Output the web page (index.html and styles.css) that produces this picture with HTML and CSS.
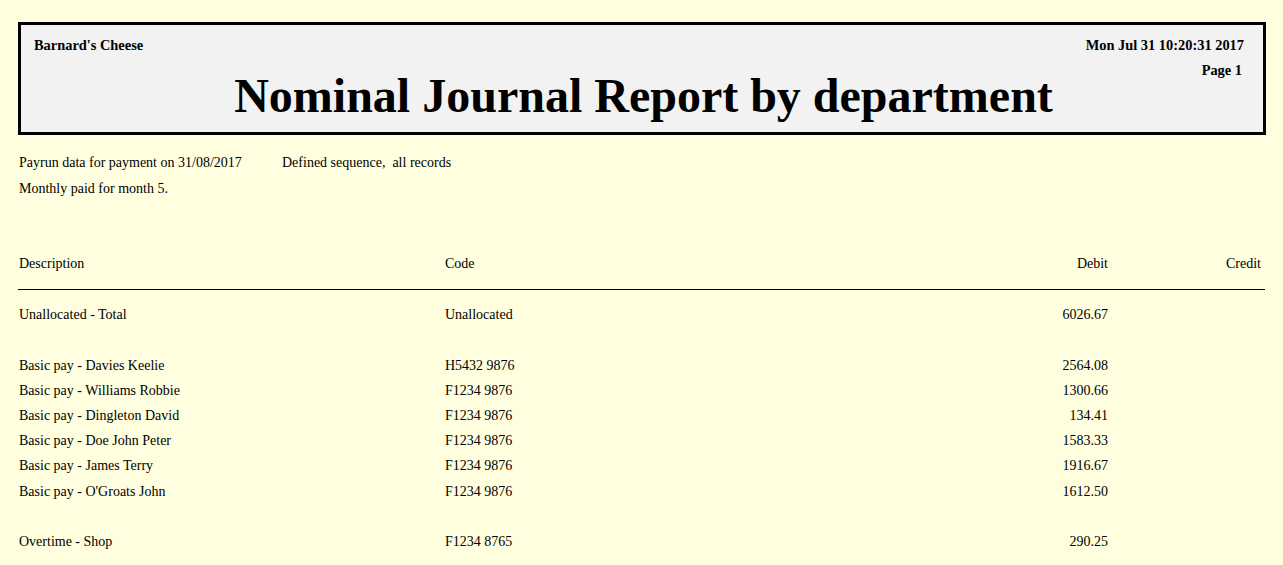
FILE: index.html
```html
<!DOCTYPE html>
<html>
<head>
<meta charset="utf-8">
<title>Nominal Journal Report by department</title>
<link rel="stylesheet" href="styles.css">
</head>
<body>
<div class="page">
  <header class="report-head">
    <div class="company">Barnard's Cheese</div>
    <div class="date">Mon Jul 31 10:20:31 2017</div>
    <h1 class="title">Nominal Journal Report by department</h1>
    <div class="pageno">Page 1</div>
  </header>

  <section class="info">
    <div class="info-line"><span class="lead">Payrun data for payment on 31/08/2017</span><span class="seq">Defined sequence,&nbsp; all records</span></div>
    <div class="info-line">Monthly paid for month 5.</div>
  </section>

  <section class="journal">
    <div class="row head">
      <div class="c-desc">Description</div>
      <div class="c-code">Code</div>
      <div class="c-debit">Debit</div>
      <div class="c-credit">Credit</div>
    </div>
    <div class="rule"></div>
    <div class="body">
      <div class="row"><div class="c-desc">Unallocated - Total</div><div class="c-code">Unallocated</div><div class="c-debit">6026.67</div><div class="c-credit"></div></div>
      <div class="row blank"></div>
      <div class="row"><div class="c-desc">Basic pay - Davies Keelie</div><div class="c-code">H5432 9876</div><div class="c-debit">2564.08</div><div class="c-credit"></div></div>
      <div class="row"><div class="c-desc">Basic pay - Williams Robbie</div><div class="c-code">F1234 9876</div><div class="c-debit">1300.66</div><div class="c-credit"></div></div>
      <div class="row"><div class="c-desc">Basic pay - Dingleton David</div><div class="c-code">F1234 9876</div><div class="c-debit">134.41</div><div class="c-credit"></div></div>
      <div class="row"><div class="c-desc">Basic pay - Doe John Peter</div><div class="c-code">F1234 9876</div><div class="c-debit">1583.33</div><div class="c-credit"></div></div>
      <div class="row"><div class="c-desc">Basic pay - James Terry</div><div class="c-code">F1234 9876</div><div class="c-debit">1916.67</div><div class="c-credit"></div></div>
      <div class="row"><div class="c-desc">Basic pay - O'Groats John</div><div class="c-code">F1234 9876</div><div class="c-debit">1612.50</div><div class="c-credit"></div></div>
      <div class="row blank"></div>
      <div class="row"><div class="c-desc">Overtime - Shop</div><div class="c-code">F1234 8765</div><div class="c-debit">290.25</div><div class="c-credit"></div></div>
    </div>
  </section>
</div>
</body>
</html>
```

FILE: styles.css
```css
html, body {
  margin: 0;
  padding: 0;
  background: #ffffe0;
}
body {
  font-family: "Liberation Serif", "Times New Roman", serif;
  font-size: 14px;
  color: #000;
}
.page {
  padding: 22px 17px 0 18px;
}
.report-head {
  border: 3px solid #000;
  background: #f2f2f2;
  box-sizing: border-box;
  height: 113px;
  display: grid;
  grid-template-columns: 1fr auto;
  grid-template-rows: 25px auto;
  padding: 12px 19px 0 13px;
}
.company, .date, .pageno {
  font-weight: bold;
  font-size: 14.4px;
  line-height: 16px;
}
.company { grid-column: 1; grid-row: 1; }
.date { grid-column: 2; grid-row: 1; text-align: right; }
.pageno { grid-column: 2; grid-row: 2; text-align: right; padding-right: 2px; align-self: start; }
.title {
  grid-column: 1 / -1;
  grid-row: 2;
  margin: 6px 0 0 0;
  text-align: center;
  font-size: 48px;
  line-height: 56px;
  font-weight: bold;
  padding-left: 9px;
}
.info {
  margin-top: 15px;
  padding-left: 1px;
}
.info-line {
  line-height: 26px;
  display: flex;
}
.lead { width: 263px; flex: none; }
.journal {
  margin-top: 49px;
}
.row {
  display: grid;
  grid-template-columns: 426px 513px 150px 153px;
  height: 25.2px;
  line-height: 25.2px;
  padding-left: 1px;
}
.c-debit, .c-credit { text-align: right; }
.rule {
  border-top: 1px solid #000;
  margin: 13px 0 12px 0;
  width: 1247px;
}
```
